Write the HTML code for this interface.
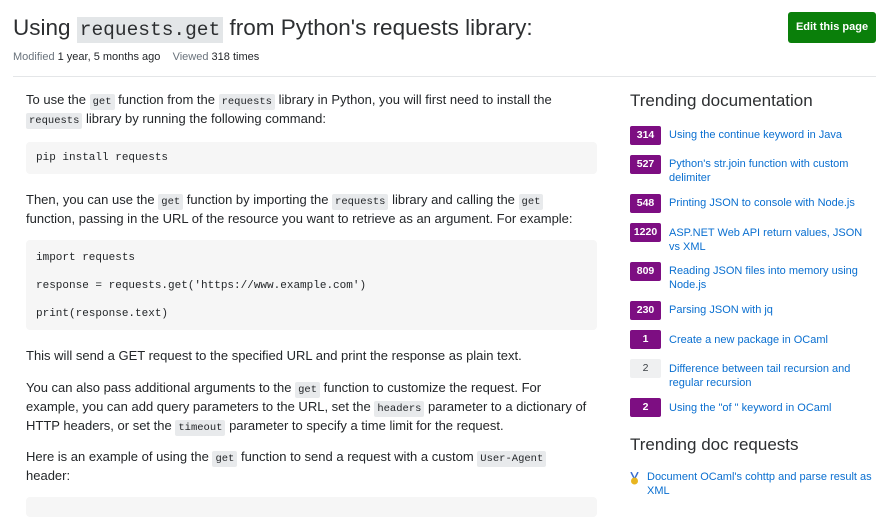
<!DOCTYPE html>
<html><head><style>
body{margin:0;width:894px;height:500px;overflow:hidden;background:#fff;font-family:"Liberation Sans",sans-serif;color:#232629;position:relative}
.a{position:absolute;white-space:nowrap}
h1{position:absolute;left:13px;top:12px;margin:0;font-size:22.5px;font-weight:400;color:#2d2f31;line-height:32px;white-space:nowrap}
h1 code{font-family:"Liberation Mono",monospace;background:#e3e6e8;padding:2px 3px;font-size:19.5px}
.meta{left:13px;top:51px;font-size:11px;color:#232629}
.meta span{color:#6a737c}
.btn{left:788px;top:12px;width:88px;height:31px;background:#0a7f0a;border-radius:3px;color:#fff;font-size:11px;line-height:31px;text-align:center;font-weight:bold}
.hr{position:absolute;left:13px;top:76px;width:863px;height:1px;background:#e4e6e8}
p{position:absolute;left:26px;margin:0;font-size:13px;line-height:19px;white-space:nowrap;color:#232629}
p code{font-family:"Liberation Mono",monospace;font-size:10.5px;line-height:1;background:#e8eaec;padding:2px 3px;border-radius:2px}
pre{position:absolute;left:26px;width:571px;margin:0;background:#f6f6f6;border-radius:4px;font-family:"Liberation Mono",monospace;font-size:11px;padding:0 10px;box-sizing:border-box;line-height:28px;color:#232629}
h3{position:absolute;left:630px;margin:0;font-size:17px;font-weight:400;color:#2d2f31;white-space:nowrap}
.b{position:absolute;left:630px;width:31px;height:19px;background:#7d0e82;color:#fff;font-size:10.5px;font-weight:bold;text-align:center;line-height:19px;border-radius:2px}
.b.g{background:#eff0f1;color:#3b4045;font-weight:normal}
.l{position:absolute;left:669px;width:205px;font-size:11px;line-height:14px;color:#0a6fd0}
</style></head><body>
<h1>Using <code>requests.get</code> from Python's requests library:</h1>
<div class="a meta"><span>Modified</span> 1 year, 5 months ago &nbsp;&nbsp; <span>Viewed</span> 318 times</div>
<div class="a btn">Edit this page</div>
<div class="hr"></div>

<p style="top:90px">To use the <code>get</code> function from the <code>requests</code> library in Python, you will first need to install the<br><code>requests</code> library by running the following command:</p>
<pre style="top:142px;height:32px;line-height:32px">pip install requests</pre>
<p style="top:190px">Then, you can use the <code>get</code> function by importing the <code>requests</code> library and calling the <code>get</code><br>function, passing in the URL of the resource you want to retrieve as an argument. For example:</p>
<pre style="top:240px;height:90px;padding-top:4px">import requests
response = requests.get('https://www.example.com')
print(response.text)</pre>
<p style="top:346px">This will send a GET request to the specified URL and print the response as plain text.</p>
<p style="top:378px">You can also pass additional arguments to the <code>get</code> function to customize the request. For<br>example, you can add query parameters to the URL, set the <code>headers</code> parameter to a dictionary of<br>HTTP headers, or set the <code>timeout</code> parameter to specify a time limit for the request.</p>
<p style="top:447px">Here is an example of using the <code>get</code> function to send a request with a custom <code>User-Agent</code><br>header:</p>
<pre style="top:497px;height:20px"></pre>

<h3 style="top:91px">Trending documentation</h3>
<div class="b" style="top:126px">314</div><div class="l" style="top:128px">Using the continue keyword in Java</div>
<div class="b" style="top:155px">527</div><div class="l" style="top:157px">Python's str.join function with custom delimiter</div>
<div class="b" style="top:194px">548</div><div class="l" style="top:196px">Printing JSON to console with Node.js</div>
<div class="b" style="top:223px">1220</div><div class="l" style="top:226px">ASP.NET Web API return values, JSON vs XML</div>
<div class="b" style="top:262px">809</div><div class="l" style="top:264px">Reading JSON files into memory using Node.js</div>
<div class="b" style="top:301px">230</div><div class="l" style="top:303px">Parsing JSON with jq</div>
<div class="b" style="top:330px">1</div><div class="l" style="top:333px">Create a new package in OCaml</div>
<div class="b g" style="top:359px">2</div><div class="l" style="top:362px">Difference between tail recursion and regular recursion</div>
<div class="b" style="top:398px">2</div><div class="l" style="top:401px">Using the "of " keyword in OCaml</div>
<h3 style="top:435px">Trending doc requests</h3>
<svg style="position:absolute;left:630px;top:472px" width="9" height="14" viewBox="0 0 9 14"><path d="M1 0L4 6M8 0L5 6" stroke="#3a6fd0" stroke-width="1.5"/><circle cx="4.5" cy="9" r="3.5" fill="#e8b520"/></svg>
<div class="l" style="left:647px;top:470px;width:235px">Document OCaml's cohttp and parse result as XML</div>
</body></html>
